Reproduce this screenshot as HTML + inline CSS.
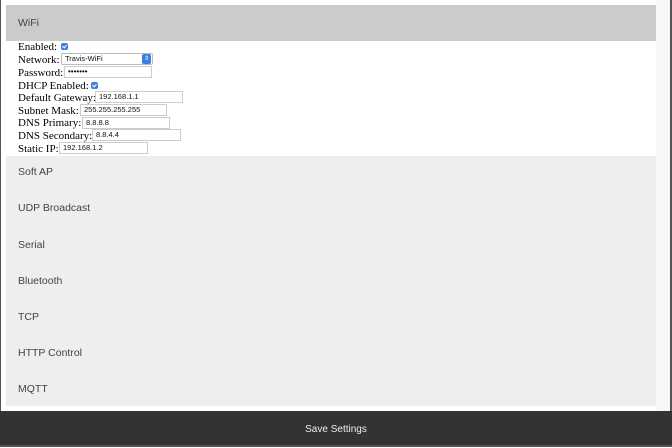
<!DOCTYPE html>
<html><head><style>
body{margin:0;width:672px;height:447px;position:relative;overflow:hidden;background:#fff;font-family:"Liberation Serif",serif;font-size:11px;color:#000}
.a{position:absolute}
.hd{left:6px;top:5px;width:650px;height:36px;background:#cbcbcb}
.sec{left:6px;top:156px;width:650px;height:250px;background:#eeeeee}
.t{font-family:"Liberation Sans",sans-serif;font-size:10.5px;color:#444;left:18px}
.l{left:18px;line-height:12px;white-space:nowrap;margin-top:1px}
.in{position:absolute;height:10px;border:1px solid #ccc;background:#fff;font-family:"Liberation Sans",sans-serif;font-size:7.5px;line-height:10px;padding-left:3px;box-sizing:content-box;color:#111}
.cb{position:absolute;width:7px;height:7px;background:#3b7fe0;border-radius:2px}
.cb:after{content:"";position:absolute;left:2px;top:1px;width:2px;height:3px;border:solid #fff;border-width:0 1px 1px 0;transform:rotate(40deg)}
.ft{left:0;top:411px;width:672px;height:34px;background:#333;color:#eee;font-family:"Liberation Sans",sans-serif;font-size:10px;text-align:center;line-height:37px}
</style></head><body>
<div class="a" style="left:0;top:0;width:1px;height:447px;background:#555"></div>
<div class="a" style="right:0;top:0;width:2px;height:447px;background:#555"></div>
<div class="a" style="left:656px;top:0;width:14px;height:411px;background:#f7f7f7"></div>
<div class="a hd"></div>
<div class="a t" style="top:17px">WiFi</div>
<div class="a l" style="top:40px">Enabled:</div><div class="cb" style="left:61px;top:43px"></div>
<div class="a l" style="top:53px">Network:</div>
<div class="in" style="left:61px;top:53px;width:87px;border-radius:2px;border-color:#bbb">Travis-WiFi</div>
<div class="a" style="left:142px;top:54px;width:9px;height:10px;background:#3b7fe0;border-radius:2px;color:#fff;font-size:6px;line-height:10px;text-align:center;font-family:'DejaVu Sans'">⇕</div>
<div class="a l" style="top:66px">Password:</div>
<div class="in" style="left:64px;top:66px;width:83px;font-size:8px;line-height:9px">•••••••</div>
<div class="a l" style="top:79px">DHCP Enabled:</div><div class="cb" style="left:91px;top:82px"></div>
<div class="a l" style="top:91px">Default Gateway:</div>
<div class="in" style="left:95px;top:91px;width:83px">192.168.1.1</div>
<div class="a l" style="top:104px">Subnet Mask:</div>
<div class="in" style="left:80px;top:104px;width:82px">255.255.255.255</div>
<div class="a l" style="top:116px">DNS Primary:</div>
<div class="in" style="left:82px;top:117px;width:83px">8.8.8.8</div>
<div class="a l" style="top:129px">DNS Secondary:</div>
<div class="in" style="left:92px;top:129px;width:84px">8.8.4.4</div>
<div class="a l" style="top:142px">Static IP:</div>
<div class="in" style="left:59px;top:142px;width:84px">192.168.1.2</div>
<div class="a sec"></div>
<div class="a t" style="top:166px">Soft AP</div>
<div class="a t" style="top:202px">UDP Broadcast</div>
<div class="a t" style="top:239px">Serial</div>
<div class="a t" style="top:275px">Bluetooth</div>
<div class="a t" style="top:311px">TCP</div>
<div class="a t" style="top:347px">HTTP Control</div>
<div class="a t" style="top:383px">MQTT</div>
<div class="a ft">Save Settings</div>
<div class="a" style="left:0;top:445px;width:672px;height:2px;background:#555"></div>
</body></html>
